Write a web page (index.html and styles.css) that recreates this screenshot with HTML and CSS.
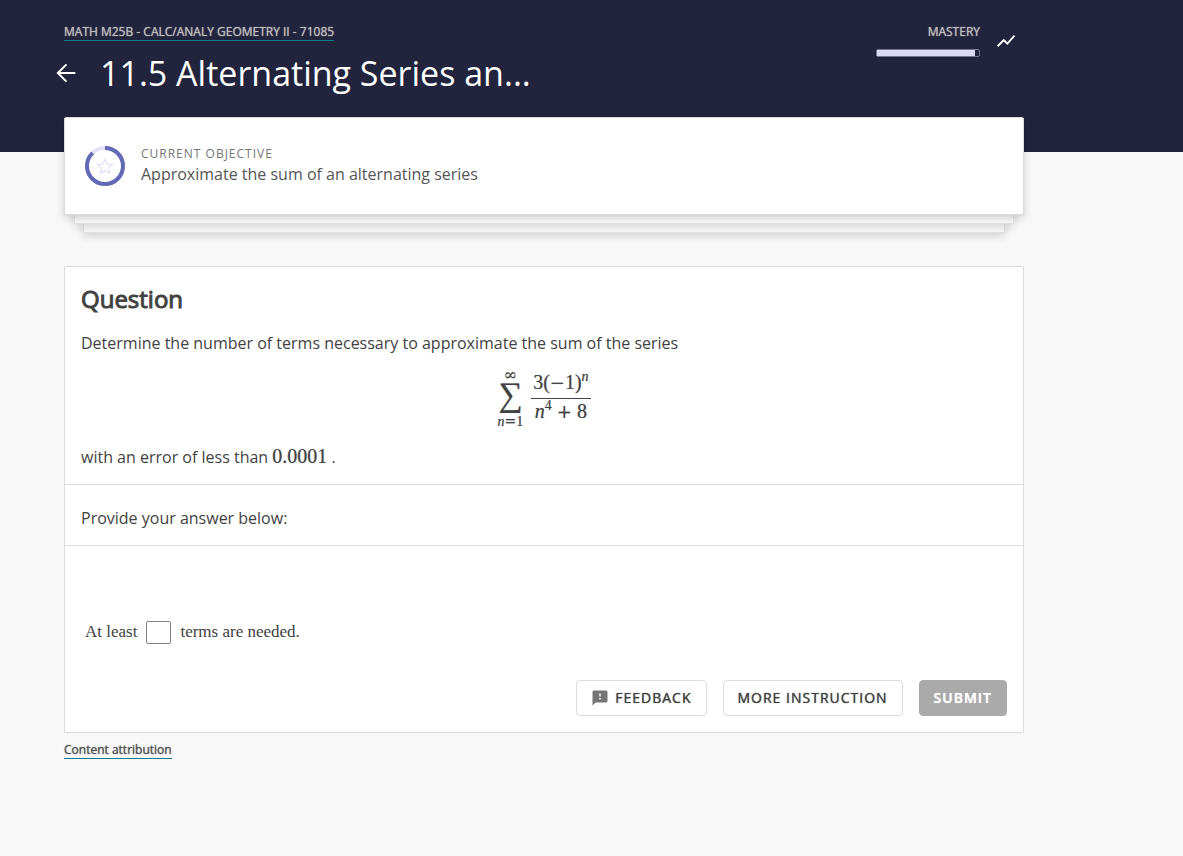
FILE: index.html
```html
<!DOCTYPE html>
<html lang="en">
<head>
<meta charset="utf-8">
<meta name="viewport" content="width=device-width, initial-scale=1">
<title>11.5 Alternating Series</title>
<link rel="stylesheet" href="styles.css">
</head>
<body>
<header class="banner">
  <div class="wrap banner-inner">
    <div class="heading">
      <a class="crumb" href="#">MATH M25B - CALC/ANALY GEOMETRY II - 71085</a>
      <div class="title-row">
        <button class="back" type="button" aria-label="Back">
          <svg width="28" height="28" viewBox="0 0 24 24" fill="#fff"><path d="M20 11.15H7.1l5.95-5.95L11.8 4 3.8 12l8 8 1.2-1.2-5.9-5.95H20z"/></svg>
        </button>
        <h1 class="title">11.5 Alternating Series an...</h1>
      </div>
    </div>
    <div class="mastery">
      <div class="mastery-info">
        <span class="mastery-label">MASTERY</span>
        <div class="meter" role="progressbar" aria-label="Mastery" aria-valuenow="96" aria-valuemin="0" aria-valuemax="100"><div class="meter-fill" style="width:96%"></div></div>
      </div>
      <svg class="trend" width="22" height="22" viewBox="0 0 24 24" fill="#fff"><path d="M3.5 18.49l6-6.01 4 4L22 6.92l-1.41-1.41-7.09 7.97-4-4L2 16.99z"/></svg>
    </div>
  </div>
</header>
<main class="wrap">
  <section class="stack">
    <div class="objective">
      <svg class="ring" width="40" height="40" viewBox="0 0 40 40" fill="none">
        <circle cx="20" cy="20" r="18" stroke="#e4e4f7" stroke-width="4"/>
        <circle cx="20" cy="20" r="18" stroke="#6369b5" stroke-width="4" pathLength="100" stroke-dasharray="88 12" transform="rotate(-90 20 20)"/>
        <path d="M20 13.2l2.1 4.8 5.2.5-3.9 3.5 1.1 5.1-4.5-2.7-4.5 2.7 1.1-5.1-3.9-3.5 5.2-.5z" stroke="#e4e4f7" stroke-width="1.4"/>
      </svg>
      <div>
        <div class="eyebrow">CURRENT OBJECTIVE</div>
        <div class="objective-name">Approximate the sum of an alternating series</div>
      </div>
    </div>
    <div class="sheet sheet-one"></div>
    <div class="sheet sheet-two"></div>
  </section>

  <form class="question">
    <section class="prompt">
      <h2 class="question-title">Question</h2>
      <p class="copy">Determine the number of terms necessary to approximate the sum of the series</p>
      <div class="formula">
        <span class="sum"><span class="infinity">∞</span><span class="sigma">∑</span><span class="limit"><i>n</i><span class="op">=</span>1</span></span>
        <span class="fraction"><span class="numerator">3(<span class="op">−</span>1)<sup><i>n</i></sup></span><span class="denominator"><i>n</i><sup>4</sup> <span class="op">+</span> 8</span></span>
      </div>
      <p class="copy">with an error of less than <span class="number">0.0001</span> .</p>
    </section>
    <section class="instruction"><p class="copy">Provide your answer below:</p></section>
    <section class="answer">
      <div class="answer-line"><label for="terms">At least</label><input id="terms" class="blank" type="text"><span>terms are needed.</span></div>
      <div class="actions">
        <button class="btn" type="button">
          <svg width="18" height="18" viewBox="0 0 24 24" fill="#757575"><path d="M20 2H4c-1.100 0-1.990.9-1.990 2L2 22l4-4h14c1.100 0 2-.9 2-2V4c0-1.100-.9-2-2-2zm-7 12h-2v-2h2v2zm0-4h-2V6h2v4z"/></svg>
          FEEDBACK
        </button>
        <button class="btn" type="button">MORE INSTRUCTION</button>
        <button class="btn btn-submit" type="submit" disabled>SUBMIT</button>
      </div>
    </section>
  </form>
  <a class="attribution" href="#">Content attribution</a>
</main>
</body>
</html>
```
FILE: styles.css
```css
* {
  box-sizing: border-box;
}

body {
  margin: 0;
  background: #f8f8f8;
  color: #424242;
  font: 16px/24px "Open Sans", sans-serif;
}

h1, h2, p {
  margin: 0;
}

.wrap {
  max-width: 960px;
  margin: 0 64px;
}

.banner {
  min-height: 152px;
  padding-top: 24px;
  background: #22233d;
  color: #fff;
}

.banner-inner {
  display: flex;
  justify-content: space-between;
}

.crumb {
  display: block;
  width: fit-content;
  border-bottom: 1px solid #007c8a;
  color: #bdbdbd;
  font-size: 12px;
  line-height: 16px;
  text-decoration: none;
  text-shadow: 0 0 1px currentColor;
}

.title-row {
  display: flex;
  align-items: center;
  gap: 20px;
  margin: 8px 0 0 -12px;
}

.back {
  display: flex;
  padding: 0;
  border: 0;
  background: none;
}

.title {
  font-size: 34px;
  font-weight: 400;
  line-height: 48px;
}

.mastery {
  display: flex;
  align-items: flex-start;
  gap: 15px;
  padding-right: 7px;
}

.mastery-info {
  width: 104px;
  text-align: right;
}

.mastery-label {
  display: block;
  color: #bdbdbd;
  font-size: 12px;
  line-height: 16px;
  text-shadow: 0 0 1px currentColor;
}

.meter {
  height: 8px;
  margin-top: 9px;
  border: 1px solid #77778c;
  border-radius: 2px;
}

.meter-fill {
  height: 100%;
  background: #dadaf5;
}

.trend {
  margin-top: 6px;
}

.stack {
  margin-top: -35px;
}

.objective {
  position: relative;
  z-index: 2;
  display: flex;
  align-items: center;
  gap: 16px;
  min-height: 98px;
  padding: 20px;
  border: 1px solid #dcdcdc;
  border-radius: 2px;
  background: #fff;
  box-shadow: 0 3px 8px rgba(0, 0, 0, .18);
}

.eyebrow {
  color: #757575;
  font-size: 12px;
  line-height: 16px;
  letter-spacing: 1px;
}

.objective-name {
  color: #555;
}

.sheet {
  position: relative;
  height: 9px;
  border: 1px solid #e4e4e4;
  border-top: 0;
  border-radius: 0 0 2px 2px;
  background: #fafafa;
  box-shadow: 0 3px 8px rgba(0, 0, 0, .16);
}

.sheet-one {
  z-index: 1;
  margin: 0 10px;
}

.sheet-two {
  margin: 0 19px;
}

.question {
  margin-top: 33px;
  border: 1px solid #dcdcdc;
  border-radius: 2px;
  background: #fff;
}

.prompt {
  padding: 16px 16px 15px;
}

.question-title {
  margin-bottom: 16px;
  font-size: 24px;
  font-weight: 400;
  line-height: 32px;
  -webkit-text-stroke: 1px currentColor;
}

.formula {
  display: flex;
  align-items: flex-start;
  justify-content: center;
  gap: 8px;
  height: 58px;
  margin: 15px 0 17px;
  font-family: "Liberation Serif", serif;
  font-size: 20px;
  text-shadow: 0 0 1px rgba(66, 66, 66, .5);
}

.sum {
  display: grid;
  justify-items: center;
}

.limit {
  padding-top: 8px;
  font-size: 14px;
  line-height: 14px;
}

.infinity {
  padding-bottom: 4px;
  font-family: "DejaVu Serif", serif;
  font-size: 16px;
  line-height: 10px;
}

.sigma {
  font-size: 34px;
  line-height: 22px;
}

.fraction {
  display: grid;
  text-align: center;
  line-height: 24px;
}

.numerator {
  padding: 0 2px 4px;
  border-bottom: 1px solid #424242;
}

.fraction sup {
  font-size: 14px;
  line-height: 0;
}

.op {
  font-family: "DejaVu Serif", serif;
}

.fraction .op {
  font-size: 18px;
  line-height: 20px;
}

.sum .op {
  font-size: 14px;
}

.number {
  font-family: "Liberation Serif", serif;
  font-size: 20px;
  line-height: 20px;
  text-shadow: 0 0 1px rgba(66, 66, 66, .5);
}

.instruction {
  padding: 21px 16px 15px;
  border-top: 1px solid #dcdcdc;
}

.answer {
  padding: 74px 16px 16px;
  border-top: 1px solid #dcdcdc;
}

.answer-line {
  display: flex;
  align-items: center;
  gap: 9px;
  padding-left: 4px;
  font-family: "Liberation Serif", serif;
  font-size: 17px;
}

.blank {
  width: 25px;
  height: 23px;
  padding: 0 4px;
  border: 1px solid #858585;
  border-radius: 2px;
}

.actions {
  display: flex;
  justify-content: flex-end;
  gap: 16px;
  margin-top: 36px;
}

.btn {
  display: flex;
  align-items: center;
  gap: 6px;
  height: 36px;
  padding: 0 14px;
  border: 1px solid #dcdcdc;
  border-radius: 4px;
  background: #fff;
  color: #424242;
  font: 400 14px/20px "Open Sans", sans-serif;
  letter-spacing: 1px;
  text-shadow: 0 0 1px currentColor;
}

.btn-submit {
  border-color: #aaa;
  background: #aaa;
  color: #fff;
  font-weight: 600;
}

.attribution {
  display: block;
  width: fit-content;
  margin-top: 9px;
  border-bottom: 1px solid #007c8a;
  color: #555;
  font-size: 12px;
  line-height: 16px;
  text-decoration: none;
  text-shadow: 0 0 1px currentColor;
}
```
